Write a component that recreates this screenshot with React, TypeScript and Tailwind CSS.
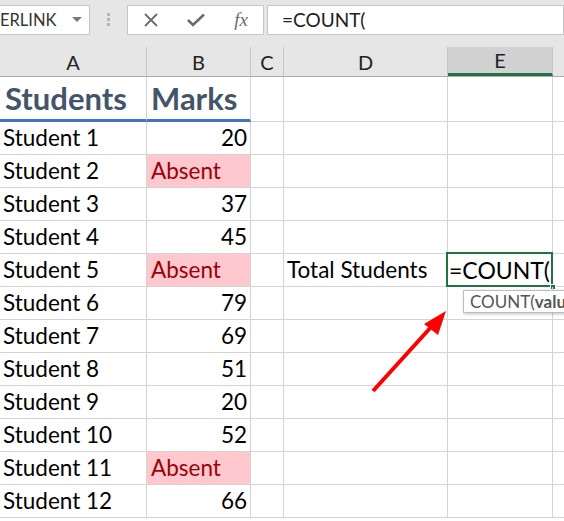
import React from 'react'

type Row = { name: string; mark: number | null }

const rows: Row[] = [
  { name: 'Student 1', mark: 20 },
  { name: 'Student 2', mark: null },
  { name: 'Student 3', mark: 37 },
  { name: 'Student 4', mark: 45 },
  { name: 'Student 5', mark: null },
  { name: 'Student 6', mark: 79 },
  { name: 'Student 7', mark: 69 },
  { name: 'Student 8', mark: 51 },
  { name: 'Student 9', mark: 20 },
  { name: 'Student 10', mark: 52 },
  { name: 'Student 11', mark: null },
  { name: 'Student 12', mark: 66 },
]

const font = { fontFamily: 'Lato, "Open Sans", sans-serif' }
const cell = 'h-full shrink-0 border-r border-b border-[#d4d4d4] flex items-center'

function FormulaBar() {
  return (
    <div className="flex h-[47px] items-start bg-[#e6e6e6] pt-[5px]">
      <div className="ml-[-1px] flex h-[30px] w-[91px] items-center justify-between border border-[#c6c6c6] bg-white pr-[7px]">
        <span className="text-[16.5px] text-[#333]" style={font}>ERLINK</span>
        <svg width="10" height="6" viewBox="0 0 10 6">
          <path d="M0 0 L10 0 L5 5 Z" fill="#7a7a7a" />
        </svg>
      </div>
      <div className="flex w-[37px] flex-col items-center gap-[2px] pt-[8px]">
        <span className="h-[3px] w-[3px] bg-[#b5b5b5]" />
        <span className="h-[3px] w-[3px] bg-[#b5b5b5]" />
        <span className="h-[3px] w-[3px] bg-[#b5b5b5]" />
      </div>
      <div className="flex h-[30px] w-[137px] items-center border border-[#c6c6c6] bg-white">
        <div className="flex w-[46px] justify-center">
          <svg width="14" height="14" viewBox="0 0 14 14">
            <path d="M1 1 L13 13 M13 1 L1 13" stroke="#6b6b6b" strokeWidth="1.8" />
          </svg>
        </div>
        <div className="flex w-[46px] justify-center">
          <svg width="18" height="14" viewBox="0 0 18 14">
            <path d="M1 7 L6 12 L17 1.5" stroke="#6b6b6b" strokeWidth="2.6" fill="none" />
          </svg>
        </div>
        <div className="flex w-[44px] justify-center">
          <span
            className="text-[19px] italic text-[#6b6b6b]"
            style={{ fontFamily: '"Liberation Serif", serif' }}
          >
            fx
          </span>
        </div>
      </div>
      <div className="ml-[3px] flex h-[30px] flex-1 items-center border border-[#c6c6c6] bg-white pl-[14px]">
        <span className="text-[19px] text-[#222]" style={font}>=COUNT(</span>
      </div>
    </div>
  )
}

function HeaderRow() {
  const hdr = 'h-full shrink-0 border-r border-[#c8c8c8] flex items-center justify-center text-[20px] text-[#222]'
  return (
    <div className="flex h-[30px] border-b border-[#ababab] bg-[#e6e6e6]" style={font}>
      <div className={`${hdr} w-[147px]`}>A</div>
      <div className={`${hdr} w-[104px]`}>B</div>
      <div className={`${hdr} w-[33px]`}>C</div>
      <div className={`${hdr} w-[164px]`}>D</div>
      <div className={`${hdr} w-[105px] border-b-[3px] border-b-[#217346] bg-[#d2d2d2] text-[#2a5a3a]`}>E</div>
      <div className="h-full flex-1" />
    </div>
  )
}

export default function App() {
  return (
    <div className="h-[521px] w-[564px] overflow-hidden bg-white" style={font}>
      <FormulaBar />
      <HeaderRow />
      <div className="relative">
        <div className="flex h-[45px]">
          <div className={`${cell} w-[147px] border-b-[3px] border-b-[#4472c4] pl-[5px] text-[31px] font-bold text-[#44546a]`}>
            Students
          </div>
          <div className={`${cell} w-[104px] border-b-[3px] border-b-[#4472c4] pl-[4px] text-[31px] font-bold text-[#44546a]`}>
            Marks
          </div>
          <div className={`${cell} w-[33px]`} />
          <div className={`${cell} w-[164px]`} />
          <div className={`${cell} w-[105px]`} />
          <div className={`${cell} flex-1 border-r-0`} />
        </div>
        {rows.map((row, i) => (
          <div key={row.name} className="flex h-[33px] text-[22.5px] text-black">
            <div className={`${cell} w-[147px] pl-[3px]`}>{row.name}</div>
            {row.mark === null ? (
              <div className={`${cell} w-[104px] bg-[#ffc7ce] pl-[4px] text-[#9c0006]`}>Absent</div>
            ) : (
              <div className={`${cell} w-[104px] justify-end pr-[3px]`}>{row.mark}</div>
            )}
            <div className={`${cell} w-[33px]`} />
            <div className={`${cell} w-[164px] pl-[3px]`}>{i === 4 ? 'Total Students' : ''}</div>
            <div className={`${cell} relative w-[105px]`}>
              {i === 4 && (
                <>
                  <div className="absolute left-[-2px] top-[-2px] right-[-1px] bottom-[-1px] border-2 border-[#217346]" />
                  <div className="absolute bottom-[-4px] right-[-4px] h-[6px] w-[6px] border border-white bg-[#217346]" />
                  <span className="pl-[1px] text-[23px]">=COUNT(</span>
                  <span className="ml-[2px] h-[24px] w-[1px] bg-black" />
                  <div className="absolute left-[15px] top-[36px] z-10 flex h-[23px] items-center whitespace-nowrap border border-[#bdbdbd] bg-white pl-[6px] pr-[6px] text-[17px] text-[#555] shadow-[1px_1px_3px_rgba(0,0,0,0.25)]">
                    COUNT(<span className="font-bold">value1</span>, [value2], ...)
                  </div>
                </>
              )}
            </div>
            <div className={`${cell} flex-1 border-r-0`} />
          </div>
        ))}
        <svg className="pointer-events-none absolute left-0 top-0" width="564" height="444">
          <line x1="373" y1="314" x2="432" y2="249" stroke="#ff0000" strokeWidth="4" />
          <path d="M446 234 L424 247 L438 258 Z" fill="#ff0000" />
        </svg>
      </div>
    </div>
  )
}
